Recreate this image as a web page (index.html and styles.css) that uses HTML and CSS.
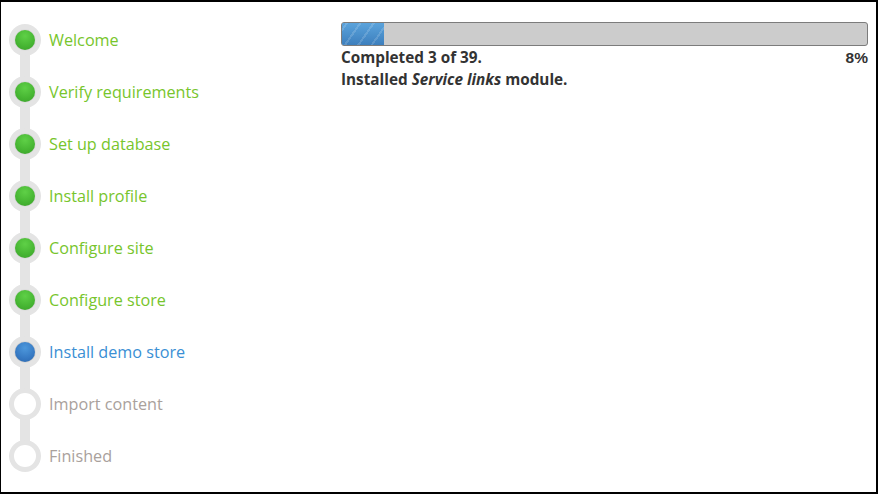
FILE: index.html
```html
<!DOCTYPE html>
<html>
<head>
<meta charset="utf-8">
<link rel="stylesheet" href="styles.css">
</head>
<body>
<div class="frame">
  <ol class="steps">
    <li class="step done"><span class="dot"></span><span class="label">Welcome</span></li>
    <li class="step done"><span class="dot"></span><span class="label">Verify requirements</span></li>
    <li class="step done"><span class="dot"></span><span class="label">Set up database</span></li>
    <li class="step done"><span class="dot"></span><span class="label">Install profile</span></li>
    <li class="step done"><span class="dot"></span><span class="label">Configure site</span></li>
    <li class="step done"><span class="dot"></span><span class="label">Configure store</span></li>
    <li class="step active"><span class="dot"></span><span class="label">Install demo store</span></li>
    <li class="step"><span class="dot"></span><span class="label">Import content</span></li>
    <li class="step last"><span class="dot"></span><span class="label">Finished</span></li>
  </ol>
  <div class="content">
    <div class="bar"><div class="fill" style="width: 8%"></div></div>
    <div class="status">
      <span class="msg">Completed 3 of 39.</span>
      <span class="pct">8%</span>
    </div>
    <div class="msg">Installed <em>Service links</em> module.</div>
  </div>
</div>
</body>
</html>
```
FILE: styles.css
```css
html, body { margin: 0; padding: 0; background: #fff; }
.frame {
  box-sizing: border-box;
  width: 878px;
  height: 494px;
  border-top: 2px solid #000;
  border-left: 1px solid #000;
  border-right: 2px solid #000;
  border-bottom: 2px solid #000;
  display: flex;
  font-family: "Open Sans", sans-serif;
}
.steps {
  list-style: none;
  margin: 0;
  padding: 20px 0 0 8px;
  width: 331px;
  flex: none;
}
.step {
  position: relative;
  display: flex;
  align-items: center;
  height: 52px;
}
.step::before {
  content: "";
  position: absolute;
  left: 11px;
  top: 26px;
  width: 10px;
  height: 52px;
  background: #e4e4e4;
}
.step.last::before { display: none; }
.step:first-child { margin-top: -8px; }
.dot {
  position: relative;
  z-index: 1;
  box-sizing: border-box;
  width: 32px;
  height: 32px;
  border-radius: 50%;
  background: #e4e4e4;
  display: flex;
  align-items: center;
  justify-content: center;
  flex: none;
}
.dot::after {
  content: "";
  width: 22px;
  height: 22px;
  border-radius: 50%;
  background: #fff;
}
.done .dot::after {
  width: 20px;
  height: 20px;
  background: radial-gradient(circle at 50% 30%, #5fd047 0%, #46b532 60%, #3aa02b 100%);
  box-shadow: 0 0 1px #999;
}
.active .dot::after {
  width: 20px;
  height: 20px;
  background: radial-gradient(circle at 50% 30%, #4d98dc 0%, #3679c3 60%, #2a66ab 100%);
  box-shadow: 0 0 1px #777;
}
.label {
  margin-left: 8px;
  font-size: 16.2px;
  color: #a9a19c;
}
.done .label { color: #77c52c; }
.active .label { color: #3a8fd4; }
.content {
  flex: 1;
  padding: 20px 8px 0 1px;
}
.bar {
  box-sizing: border-box;
  height: 24px;
  border: 1px solid #7c7c7c;
  border-radius: 3px;
  background: #cccccc;
  overflow: hidden;
}
.fill {
  height: 100%;
  background-color: #4a90cb;
  background-image: repeating-linear-gradient(-55deg, rgba(255,255,255,0) 0, rgba(255,255,255,0) 9px, rgba(255,255,255,0.15) 9px, rgba(255,255,255,0.15) 11px),
    linear-gradient(#5aa3dc, #3d7fbd);
}
.status {
  display: flex;
  justify-content: space-between;
  align-items: baseline;
}
.msg {
  font-size: 15.3px;
  font-weight: 700;
  color: #333;
  line-height: 22px;
}
.msg em { font-style: italic; }
.pct {
  font-family: "Liberation Sans", Arial, sans-serif;
  font-weight: 700;
  font-size: 15.5px;
  color: #333;
}
```
